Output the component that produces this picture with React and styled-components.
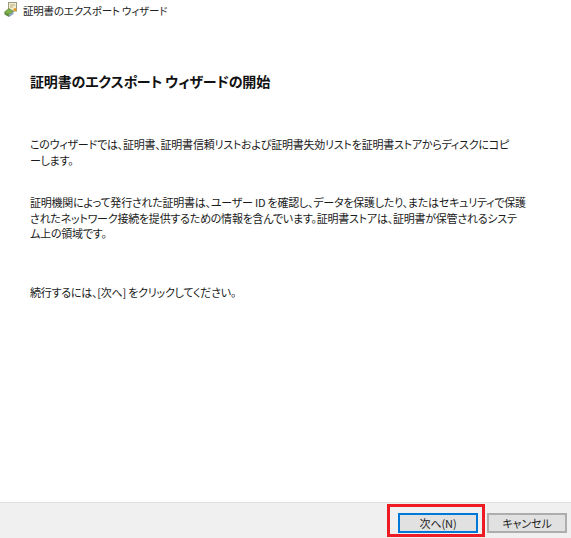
import React from "react";
import styled, { createGlobalStyle } from "styled-components";

const Global = createGlobalStyle`
  html, body { margin: 0; padding: 0; background: #fff; }
  body { font-family: "Noto Sans CJK JP", "Liberation Sans", sans-serif; color: #1a1a1a; font-feature-settings: "palt"; }
`;
const Wizard = styled.div`
  width: 571px; height: 538px; display: flex; flex-direction: column; overflow: hidden; background: #fff;
`;
const TitleBar = styled.div`
  height: 21px; display: flex; align-items: center; gap: 2px; padding-left: 4px; flex: none;
`;
const TitleText = styled.span`
  font-size: 10.5px; letter-spacing: -0.2px; color: #222; white-space: nowrap;
`;
const Main = styled.div`
  flex: 1; display: flex; flex-direction: column; padding: 49px 30px 0 30px;
`;
const Heading = styled.h1`
  margin: 0 0 45px; font-size: 14px; line-height: 22px; font-weight: 700; color: #111; letter-spacing: -0.15px;
`;
const Para = styled.p`
  margin: 0 0 ${p => p.$gap}px; font-size: 11px; line-height: 15.5px; color: #1a1a1a; letter-spacing: -0.23px; white-space: nowrap;
`;
const Footer = styled.div`
  height: 35px; flex: none; box-sizing: content-box; background: #f0f0f0; border-top: 1px solid #dfdfdf; display: flex; justify-content: flex-end; align-items: flex-end; gap: 2px; padding-right: 4px;
`;
const Highlight = styled.div`
  box-sizing: border-box; height: 33px; width: 98px; border: 3px solid #ed1c24; padding: 6px 4px 1px 8px; display: flex; margin-bottom: 1px;
`;
const Button = styled.button`
  width: 80px; height: 20px; box-sizing: border-box; padding: 0 0 2px; background: #e1e1e1; font: inherit; font-size: 11px; letter-spacing: -0.1px; color: #222; margin-bottom: ${p => (p.$primary ? 0 : 5)}px;
  border: 2px solid ${p => (p.$primary ? "#0078d7" : "#adadad")};
`;
const Icon = () => (
  <svg width="17" height="17" viewBox="0 0 17 17">
    <rect x="4.500" y="0.500" width="8" height="8.500" fill="#f1ecd2" stroke="#9a9a80" />
    <path d="M6 3h5M6 5h3" stroke="#b8ac78" />
    <circle cx="11" cy="7.500" r="1.500" fill="#e59a20" />
    <path d="M0.500 10 L5 6.500 L9.500 9.500 L5 12.500 Z" fill="#7fb24a" stroke="#4c7f2c" strokeWidth=".6" />
    <path d="M0.500 10 L5 12.500 V15 L0.500 12.500 Z" fill="#5f8f3a" />
    <path d="M5 12.500 L9.500 9.500 V12 L5 15 Z" fill="#8aa0b8" />
  </svg>
);
export default function App() {
  return (
    <>
      <Global />
      <Wizard>
        <TitleBar>
          <Icon />
          <TitleText>証明書のエクスポート ウィザード</TitleText>
        </TitleBar>
        <Main>
          <Heading>証明書のエクスポート ウィザードの開始</Heading>
          <Para $gap={27}>このウィザードでは、証明書、証明書信頼リストおよび証明書失効リストを証明書ストアからディスクにコピ<br />ーします。</Para>
          <Para $gap={43}>証明機関によって発行された証明書は、ユーザー ID を確認し、データを保護したり、またはセキュリティで保護<br />されたネットワーク接続を提供するための情報を含んでいます。証明書ストアは、証明書が保管されるシステ<br />ム上の領域です。</Para>
          <Para $gap={0}>続行するには、[次へ] をクリックしてください。</Para>
        </Main>
        <Footer>
          <Highlight><Button $primary>次へ(N)</Button></Highlight>
          <Button>キャンセル</Button>
        </Footer>
      </Wizard>
    </>
  );
}
